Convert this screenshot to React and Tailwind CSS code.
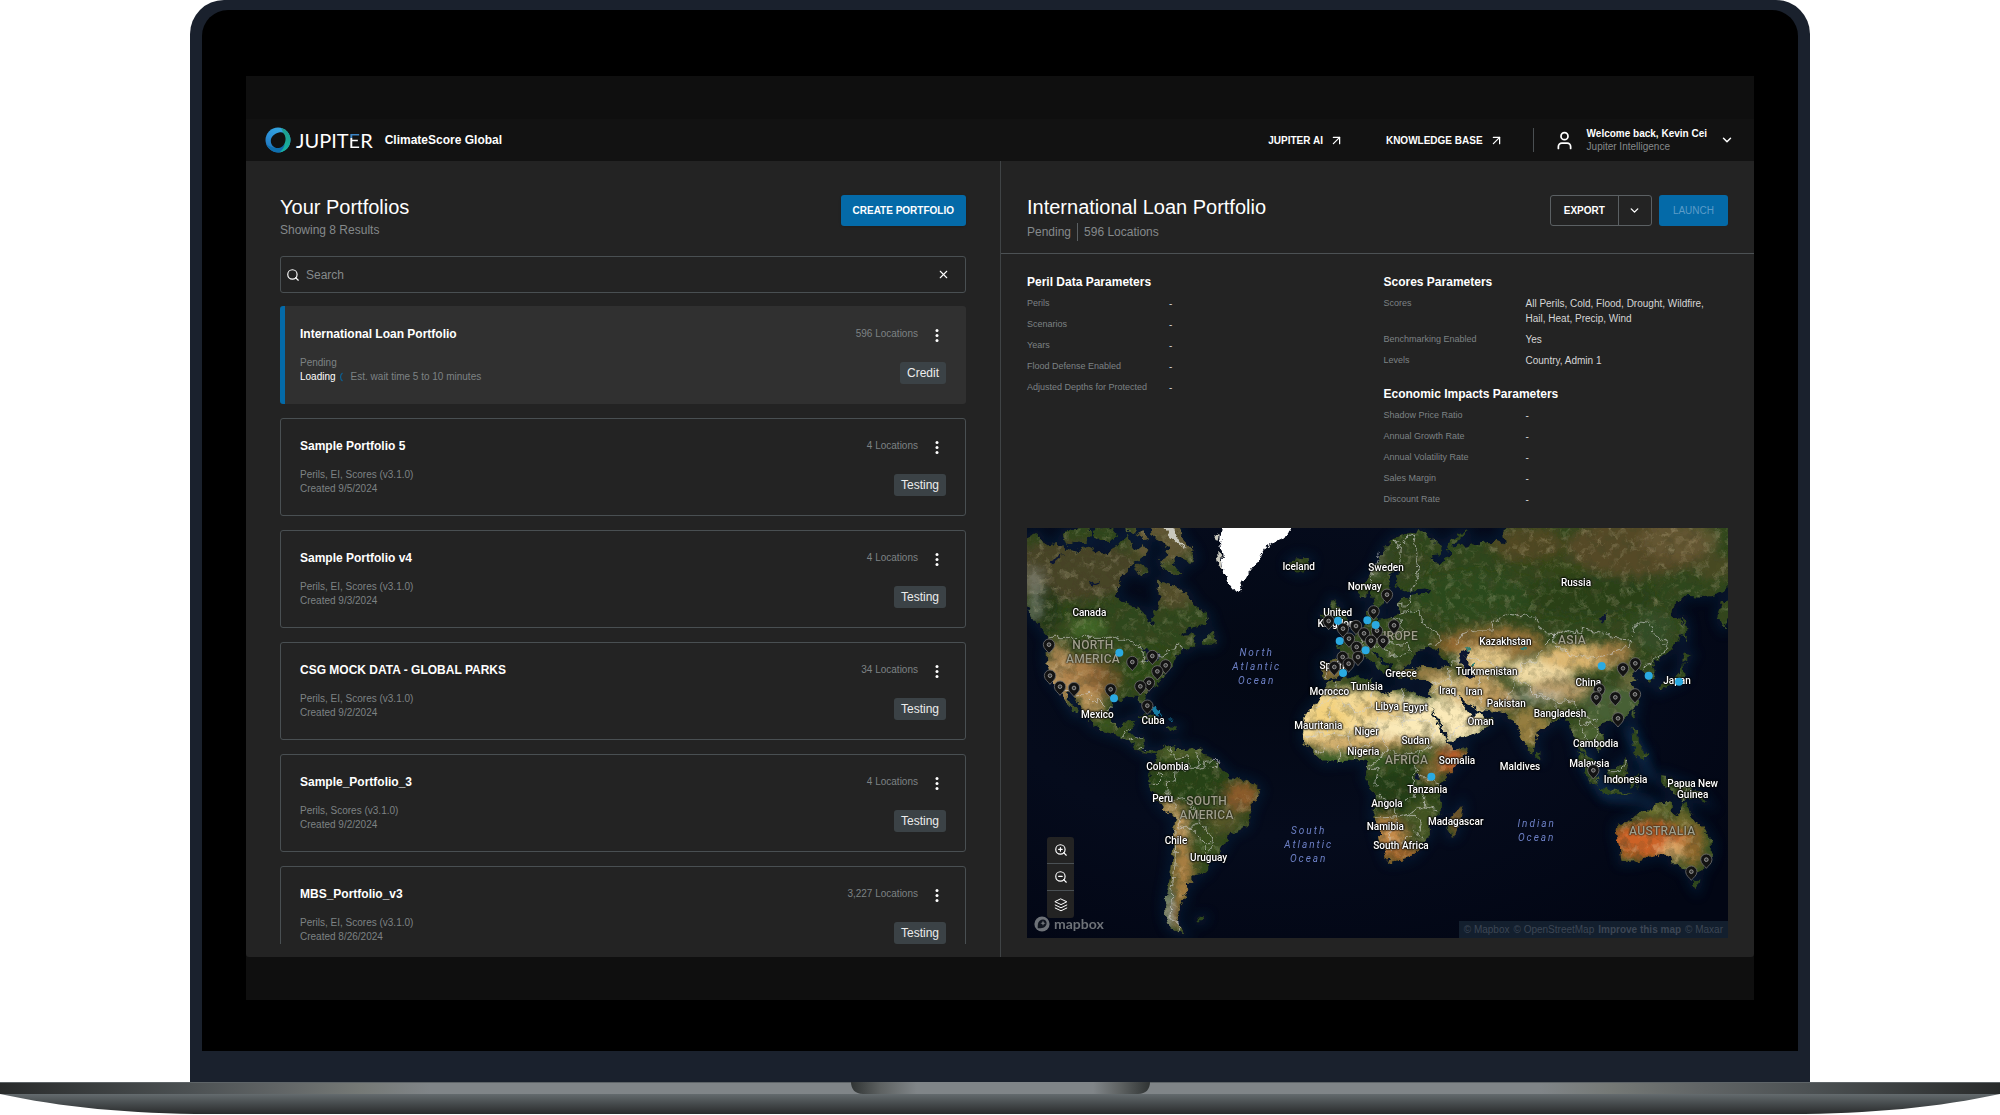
import React, { useState } from 'react';
import { ArrowUpRight, ChevronDown, Search, User, X, ZoomIn, ZoomOut } from 'lucide-react';

const PORTFOLIOS = [
  { name: 'International Loan Portfolio', locations: '596', pending: true, tag: 'Credit' },
  { name: 'Sample Portfolio 5', locations: '4', runs: 'Perils, EI, Scores (v3.1.0)', created: '9/5/2024', tag: 'Testing' },
  { name: 'Sample Portfolio v4', locations: '4', runs: 'Perils, EI, Scores (v3.1.0)', created: '9/3/2024', tag: 'Testing' },
  { name: 'CSG MOCK DATA - GLOBAL PARKS', locations: '34', runs: 'Perils, EI, Scores (v3.1.0)', created: '9/2/2024', tag: 'Testing' },
  { name: 'Sample_Portfolio_3', locations: '4', runs: 'Perils, Scores (v3.1.0)', created: '9/2/2024', tag: 'Testing' },
  { name: 'MBS_Portfolio_v3', locations: '3,227', runs: 'Perils, EI, Scores (v3.1.0)', created: '8/26/2024', tag: 'Testing' },
];

const PERIL_PARAMS = [
  ['Perils', '-'],
  ['Scenarios', '-'],
  ['Years', '-'],
  ['Flood Defense Enabled', '-'],
  ['Adjusted Depths for Protected', '-'],
];

const SCORE_PARAMS = [
  ['Scores', 'All Perils, Cold, Flood, Drought, Wildfire, Hail, Heat, Precip, Wind'],
  ['Benchmarking Enabled', 'Yes'],
  ['Levels', 'Country, Admin 1'],
];

const ECONOMIC_PARAMS = [
  ['Shadow Price Ratio', '-'],
  ['Annual Growth Rate', '-'],
  ['Annual Volatility Rate', '-'],
  ['Sales Margin', '-'],
  ['Discount Rate', '-'],
];

// map units, shared by the terrain, the labels and the markers
const MAP = { x: 21, y: 24, w: 2103, h: 1230 };

const COUNTRIES = [
  ['Canada', 208, 277], ['Mexico', 232, 583], ['Cuba', 399, 599], ['Colombia', 443, 739],
  ['Peru', 428, 834], ['Chile', 468, 961], ['Uruguay', 566, 1012], ['Iceland', 836, 139],
  ['Sweden', 1098, 140], ['Norway', 1034, 199], ['Spain', 936, 434], ['Greece', 1143, 459],
  ['Morocco', 928, 514], ['Tunisia', 1040, 499], ['Libya', 1101, 558], ['Egypt', 1186, 561],
  ['Mauritania', 895, 616], ['Niger', 1040, 633], ['Nigeria', 1030, 692], ['Sudan', 1187, 660],
  ['Somalia', 1311, 719], ['Tanzania', 1222, 806], ['Angola', 1101, 849], ['Namibia', 1096, 917],
  ['Madagascar', 1307, 904], ['South Africa', 1143, 974], ['Iraq', 1283, 510], ['Iran', 1362, 512],
  ['Oman', 1382, 603], ['Kazakhstan', 1456, 364], ['Turkmenistan', 1400, 454], ['Pakistan', 1459, 549],
  ['Russia', 1668, 187], ['China', 1705, 487], ['Bangladesh', 1620, 580], ['Cambodia', 1727, 670],
  ['Malaysia', 1708, 729], ['Indonesia', 1817, 777], ['Maldives', 1500, 738], ['Japan', 1971, 479],
  ['United\nKingdom', 953, 293], ['Papua New\nGuinea', 2018, 808],
];

const CONTINENTS = [
  ['NORTH\nAMERICA', 219, 395], ['SOUTH\nAMERICA', 560, 865], ['EUROPE', 1124, 348],
  ['AFRICA', 1160, 720], ['ASIA', 1656, 360], ['AUSTRALIA', 1927, 933],
];

const OCEANS = [
  ['North\nAtlantic\nOcean', 710, 440], ['South\nAtlantic\nOcean', 866, 976], ['Indian\nOcean', 1550, 933],
];

const PINS = [
  [87, 375], [90, 468], [120, 501], [162, 505], [272, 509], [337, 427], [397, 409], [437, 437], [412, 455],
  [387, 489], [361, 500], [382, 558], [1101, 225], [1061, 275], [926, 304], [1008, 319], [969, 327],
  [1122, 317], [1071, 333], [1032, 341], [987, 357], [1053, 363], [1089, 363], [1010, 382], [968, 412],
  [1014, 412], [986, 432], [943, 442], [1846, 431], [1809, 446], [1738, 509], [1729, 533], [1786, 533],
  [1845, 524], [1794, 596], [1720, 752], [2059, 1020], [2014, 1056],
];

const DOTS = [
  [298, 398], [282, 535], [954, 302], [1042, 301], [1067, 315], [959, 363], [1037, 391], [969, 459],
  [1745, 438], [1886, 467], [1977, 485], [1234, 770],
];

const LAND = [
  // North and Central America
  'M0 62L50 38 75 75 110 70 130 85 170 95 200 80 235 95 262 100 285 85 300 65 320 45 330 60 345 95 372 75 385 90 372 110 350 125 325 150 305 175 290 205 287 225 300 242 330 255 360 265 378 283 383 310 398 318 403 295 398 270 415 258 420 230 410 205 415 182 440 185 470 200 485 222 500 215 512 235 530 262 560 280 570 300 555 318 520 325 500 330 478 345 510 340 525 350 515 365 530 372 500 395 485 390 470 405 462 420 455 440 440 455 430 470 415 490 390 510 375 520 378 540 387 560 385 575 372 560 362 540 350 530 330 530 310 535 290 540 275 545 272 565 268 590 280 612 300 625 315 605 345 602 340 620 330 635 345 650 372 655 370 675 365 690 380 697 405 692 412 700 400 705 375 700 350 688 330 665 300 650 275 642 240 632 215 615 205 600 190 570 165 540 150 515 140 520 155 550 175 580 165 585 145 555 130 530 122 510 100 490 88 460 82 430 80 400 88 370 80 345 60 320 40 290 0 225Z',
  'M125 40L165 24 205 20 215 45 200 68 165 62 140 78Z',
  'M218 30L270 20 292 48 270 70 240 55 222 60Z',
  'M318 10L350 10 345 36 325 40Z',
  'M352 40L372 34 380 56 362 62Z',
  'M388 10L470 10 490 60 520 95 524 120 505 132 480 108 460 112 462 132 482 160 468 168 440 150 414 122 440 110 445 85 420 60 395 45Z',
  'M345 150L352 130 372 140 386 156 368 166Z',
  'M560 350L580 335 590 365 570 378 545 370Z',
  'M350 590L375 583 400 590 432 605 400 607 372 597Z',
  'M440 615L475 620 465 630 440 625Z',
  // South America
  'M412 700L425 685 450 675 470 672 460 690 485 690 515 685 540 690 545 705 575 715 598 735 615 755 625 770 660 778 700 790 718 805 716 825 700 850 690 880 683 915 660 930 630 940 615 970 600 1000 580 1020 560 1025 562 1045 545 1062 520 1065 520 1085 502 1090 505 1105 490 1120 495 1140 480 1160 478 1180 470 1195 475 1210 480 1225 495 1240 470 1235 450 1222 440 1200 435 1160 440 1120 450 1070 458 1010 462 950 465 900 450 880 425 860 405 830 388 795 395 785 388 765 392 745 405 720Z',
  'M532 1196L552 1194 546 1204 534 1204Z',
  // Iceland, British Isles
  'M806 128L830 112 870 118 868 146 838 158 812 148Z',
  'M935 240L960 255 965 280 985 300 980 318 945 322 950 300 940 280 930 260Z',
  'M905 285L930 280 928 310 905 312Z',
  // Africa and Madagascar
  'M925 480L950 480 985 472 1030 472 1060 475 1058 500 1080 512 1110 525 1120 510 1150 508 1180 520 1215 525 1228 540 1235 570 1250 605 1265 640 1285 670 1300 690 1338 682 1335 700 1310 735 1280 770 1262 790 1255 820 1263 850 1262 880 1235 905 1228 925 1230 945 1210 965 1200 985 1175 1010 1140 1020 1110 1025 1100 1015 1095 990 1080 960 1075 925 1060 895 1062 860 1065 830 1055 800 1040 780 1038 755 1045 740 1035 725 1010 715 985 722 950 722 915 728 890 705 870 685 852 665 850 650 855 620 850 600 865 575 885 555 900 530 920 510Z',
  'M1325 855L1328 870 1318 910 1305 945 1290 950 1282 925 1290 900 1310 880Z',
  // Eurasia
  'M905 470L908 440 905 425 940 420 965 425 962 395 945 380 970 370 990 355 1010 340 1030 325 1045 310 1040 285 1045 270 1060 262 1062 290 1075 300 1110 295 1130 285 1140 270 1130 255 1150 235 1185 225 1215 218 1235 213 1215 205 1185 208 1140 212 1128 190 1130 165 1150 140 1135 135 1115 160 1105 185 1110 215 1100 235 1085 260 1075 272 1060 245 1052 215 1045 220 1020 235 1008 215 1015 195 1045 175 1070 135 1090 90 1120 55 1160 40 1200 30 1230 50 1265 80 1262 105 1230 110 1240 125 1255 130 1290 110 1290 80 1310 75 1335 80 1370 70 1430 65 1455 74 1450 35 1455 0 2150 0 2150 205 2124 205 2090 220 2060 228 2000 225 1960 260 1955 290 1985 300 1990 330 1975 365 1950 390 1930 410 1905 425 1895 445 1905 480 1885 490 1880 465 1865 450 1840 455 1830 465 1850 475 1830 490 1850 515 1855 545 1840 570 1815 590 1790 605 1770 605 1750 615 1735 625 1750 650 1755 670 1735 690 1720 680 1705 665 1690 670 1690 690 1715 720 1725 745 1705 735 1685 700 1675 660 1655 640 1650 610 1635 595 1605 600 1590 615 1555 640 1548 670 1535 698 1520 680 1500 640 1490 610 1470 600 1455 580 1430 575 1375 570 1355 555 1335 545 1322 530 1330 555 1345 575 1362 592 1380 575 1395 590 1420 603 1390 630 1350 645 1300 663 1285 665 1275 640 1255 600 1235 565 1228 545 1230 520 1232 490 1225 480 1200 480 1165 478 1150 460 1165 445 1215 440 1260 445 1290 435 1270 415 1255 400 1270 385 1240 395 1225 385 1200 385 1180 405 1172 430 1150 440 1155 460 1140 475 1125 460 1115 445 1100 425 1075 410 1070 395 1058 390 1060 400 1085 425 1105 440 1090 460 1075 445 1050 420 1030 405 1010 410 985 425 975 450 955 472 925 475Z',
  'M1282 95L1290 60 1320 38 1350 34 1320 54 1300 80Z',
  // Japan, Sakhalin, Kamchatka
  'M1988 400L2014 406 2000 425 1984 420Z',
  'M1990 428L1994 470 1975 487 1940 497 1918 512 1910 502 1935 486 1965 475 1980 455Z',
  'M1990 285L2002 330 1998 368 1988 350Z',
  'M2150 230L2105 250 2095 290 2110 322 2124 300Z',
  // South-east Asia
  'M1836 578L1846 576 1842 598 1834 592Z',
  'M1835 625L1850 630 1850 660 1865 690 1882 700 1872 722 1850 710 1842 680Z',
  'M1545 692L1558 700 1558 716 1546 712Z',
  'M1675 695L1700 720 1730 760 1738 797 1720 795 1700 765 1680 725Z',
  'M1735 803L1790 810 1832 824 1790 826 1740 817Z',
  'M1765 750L1800 738 1815 716 1826 740 1815 780 1790 792 1765 775Z',
  'M1832 770L1862 762 1850 780 1857 812 1845 790 1838 808Z',
  'M1920 768L1945 772 1975 785 2010 795 2040 820 2062 848 2030 835 1990 840 1970 825 1945 805 1920 790Z',
  // Australia
  'M1788 940L1792 915 1830 900 1855 880 1885 875 1905 855 1930 845 1955 848 1955 875 1980 885 1990 850 2000 845 2010 880 2030 905 2055 930 2075 965 2075 1000 2060 1035 2040 1055 2015 1060 1990 1045 1975 1030 1955 1030 1950 1010 1930 1005 1895 1010 1860 1020 1830 1025 1805 1025 1800 990Z',
  'M2015 1085L2038 1085 2030 1108Z',
].join('');

const ICE = 'M607 0L825 0 808 42 770 60 735 85 715 120 690 150 668 190 655 217 640 205 622 180 612 150 608 110 600 70Z';

const INLAND_WATER =
  'M1318 400L1335 392 1345 400 1338 415 1355 440 1362 470 1352 482 1336 474 1332 446 1318 420ZM365 385L388 392 398 402 385 405ZM384 404L392 408 382 428 374 426ZM402 400L425 408 410 418ZM1186 764L1200 762 1198 780 1188 778ZM210 190L240 180 236 190 214 198ZM95 118L130 104 100 130ZM1735 305L1762 276 1754 300 1742 312Z';

const BORDERS = [
  'M88 352L285 352 315 362 340 365 365 385 375 405 370 430 400 415 425 408 445 395 462 392 470 372 480 375 485 395',
  'M122 510L150 512 170 525 205 520 225 540 240 545 255 562 272 568',
  'M308 650L320 628 335 626M330 662L345 650 368 655M352 688L370 680M372 700L380 690',
  'M450 676L445 700 470 715 505 710 508 745 468 752 466 782 440 792 438 815 462 840 470 872M505 745L540 745 530 700M545 748L560 720 598 722 590 745 560 745M392 790L410 790 435 765 405 760M470 838L500 832 505 860 535 875 538 905 520 925 485 925 470 895M540 905L550 925 575 940 580 965 550 965 522 935M550 965L560 985 555 1020M580 965L570 1000M468 930L465 1030 455 1120 450 1200 475 1205 475 1235',
  'M1078 100L1060 150 1055 210M1122 60L1140 90 1140 130M1122 60L1150 72 1165 45 1190 42 1182 80 1198 170 1175 208M1172 222L1168 250 1130 260M1130 280L1165 275 1200 270 1205 310 1250 335 1260 350 1250 372 1225 378M1060 300L1068 330 1095 340 1125 350 1145 335 1140 300 1120 290M1030 335L1020 365 1035 385 1060 380 1090 375 1100 400 1130 405 1165 400M1095 345L1120 375 1160 370 1175 395M950 425L985 428M920 430L922 470',
  'M1288 440L1310 420 1330 440M1232 490L1290 478 1285 445M1290 478L1300 510 1322 530M1232 520L1260 500 1290 520 1320 535M1300 630L1340 610 1372 580M1300 630L1290 660',
  'M1310 375L1325 345 1360 330 1420 330 1412 310 1470 280 1490 285 1510 280 1530 295 1545 292 1580 340 1605 345 1575 375 1560 390 1550 420 1500 435 1495 460 1450 445 1400 425 1360 420 1345 410M1605 345L1640 330 1680 340 1690 325 1730 335 1780 355 1835 360 1830 382 1800 385 1770 405 1700 415 1640 400 1605 370 1600 345M1835 345L1850 305 1885 310 1900 340 1940 365 1930 400 1905 420 1870 445',
  'M1495 460L1480 490 1470 520 1450 550 1400 560M1495 470L1520 500 1550 530 1610 545 1660 540 1670 570 1690 590 1735 600M1555 520L1600 540M1610 550L1615 590 1635 595M1670 575L1680 620 1710 605 1735 640 1725 665M1685 625L1700 660M1380 470L1375 520 1390 560M1400 470L1440 460',
  'M950 482L945 530 890 560M945 530L1010 580 1055 560 1060 500M1150 508L1150 600 1225 600M1150 600L1100 580 1055 560M1150 620L1150 600M930 560L925 640 860 650M925 640L985 650 1010 610M985 650L990 690 1045 680 1070 650 1070 590M1010 720L1005 690M960 722L955 670M880 690L910 700 915 680M1045 740L1075 720 1100 690 1090 650M1100 690L1140 700 1200 695 1235 680 1240 640 1225 600M1200 695L1185 740 1200 770 1260 790M1045 745L1075 745 1065 800M1065 830L1090 830 1100 850 1130 850 1130 890 1065 895M1130 850L1180 830 1180 770 1185 740M1130 890L1165 880 1210 860 1255 870M1130 890L1110 950 1110 985 1140 970 1180 935 1210 950M1165 880L1205 900 1200 935M1210 860L1212 820 1180 800',
  'M1768 755L1800 755 1818 725M1992 785L1992 838',
];

// soft patches of ground colour: [cx, cy, rx, ry, fill, opacity]
const GROUND = [
  [150, 150, 220, 90, '#4b4227', 0.9], [70, 270, 50, 80, '#23361a', 0.9], [40, 190, 30, 50, '#8d9186', 0.6],
  [430, 60, 100, 70, '#665a38', 0.9], [465, 215, 70, 50, '#57502f', 0.9], [200, 320, 60, 28, '#47702a', 0.8],
  [45, 265, 22, 30, '#b9bcb5', 0.4], [120, 470, 50, 90, '#b08b56', 1], [190, 470, 60, 60, '#b4824a', 0.9],
  [110, 400, 22, 40, '#a27f4d', 0.8], [215, 540, 40, 50, '#c49a5e', 0.9], [250, 480, 50, 50, '#8a5d30', 0.7],
  [385, 445, 80, 60, '#2c4818', 0.9], [270, 610, 50, 25, '#3c5520', 0.9], [250, 400, 50, 30, '#51602c', 0.6],
  [500, 780, 120, 80, '#274219', 1], [480, 695, 70, 16, '#6c7a35', 0.6], [665, 830, 50, 45, '#8f5c2b', 0.95],
  [610, 900, 50, 40, '#5e5a2a', 0.8], [440, 870, 40, 22, '#c79f63', 0.9], [483, 940, 22, 70, '#d2a263', 1],
  [490, 1060, 30, 90, '#b08243', 0.95], [470, 1180, 20, 50, '#8a6a3a', 0.9], [440, 1170, 9, 70, '#dfe3e4', 0.7],
  [560, 980, 35, 60, '#37511f', 0.9],
  [1000, 600, 230, 95, '#f6dc98', 1], [1160, 600, 120, 70, '#fbeab8', 1], [930, 590, 60, 50, '#f3d07c', 0.9],
  [1080, 570, 70, 30, '#e6c377', 0.8], [1050, 668, 230, 14, '#b88a46', 0.8], [1120, 790, 90, 85, '#203c18', 1],
  [960, 715, 110, 26, '#3d5f25', 1], [1060, 722, 100, 30, '#3b5a24', 0.9], [1290, 720, 45, 40, '#bd5f2c', 1],
  [1235, 740, 30, 60, '#8a6a32', 0.8], [1220, 700, 36, 28, '#44602a', 0.8], [1100, 950, 60, 60, '#c48a48', 1],
  [1140, 1000, 60, 30, '#a8672f', 0.9], [1205, 900, 50, 55, '#4a5a26', 0.8], [1310, 900, 16, 60, '#a2623a', 0.8],
  [1290, 600, 110, 70, '#fbeab8', 1], [1370, 510, 80, 55, '#c7a566', 1], [1220, 460, 80, 22, '#a8864c', 0.9],
  [1280, 500, 60, 30, '#e6c98a', 0.9], [1440, 540, 50, 40, '#c9a060', 0.9], [1420, 370, 150, 50, '#9a7438', 0.95],
  [1390, 420, 80, 38, '#e6c989', 1], [1290, 370, 50, 26, '#97672f', 0.7], [1560, 455, 100, 42, '#f2dca4', 1],
  [1620, 510, 100, 34, '#b59a66', 1], [1690, 410, 130, 40, '#dcb66f', 1], [1780, 400, 60, 34, '#a58045', 0.9],
  [1540, 530, 90, 12, '#e4e2dc', 0.55], [1530, 620, 60, 60, '#9b8140', 0.95], [1600, 580, 50, 22, '#5f6a30', 0.8],
  [1770, 550, 90, 55, '#466036', 1], [1840, 480, 40, 26, '#8b8350', 0.7], [1710, 640, 50, 60, '#4a5f30', 0.9],
  [1600, 110, 160, 70, '#33441c', 0.8], [1520, 70, 110, 50, '#5a4a26', 0.8], [1850, 80, 210, 90, '#594a2a', 0.9],
  [1980, 60, 120, 60, '#6b5b38', 0.7], [1700, 230, 200, 60, '#2a4118', 0.9], [1350, 230, 180, 70, '#2d4b1c', 0.9],
  [1150, 130, 60, 60, '#34431f', 0.8], [1060, 110, 22, 60, '#a9ada3', 0.4], [940, 450, 40, 28, '#a37c42', 0.9],
  [1100, 370, 60, 40, '#46602a', 0.7], [1900, 330, 60, 60, '#34502a', 0.9], [2080, 140, 60, 40, '#4f4c26', 0.8],
  [1890, 960, 120, 55, '#cc6227', 1], [1960, 990, 40, 30, '#e2b070', 0.9], [2020, 970, 40, 60, '#a8702f', 0.8],
  [2060, 960, 18, 90, '#3f5524', 0.8], [1990, 905, 40, 30, '#7d7231', 0.8], [1900, 870, 60, 18, '#7c7a34', 0.9],
  [2010, 1045, 40, 16, '#4b5f2a', 0.9], [1810, 1020, 20, 14, '#6a6a30', 0.8],
];

const place = (x, y) => ({
  left: `${((x - MAP.x) / MAP.w) * 100}%`,
  top: `${((y - MAP.y) / MAP.h) * 100}%`,
});

const MapTerrain = () => (
  <svg viewBox="21 24 2103 1230" className="absolute inset-0 size-full" aria-hidden="true">
    <defs>
      <clipPath id="land"><path d={LAND} /></clipPath>
      <radialGradient id="sea" cx="0.35" cy="0.35" r="0.8">
        <stop offset="0" stopColor="#030814" />
        <stop offset="0.5" stopColor="#050b1c" />
        <stop offset="1" stopColor="#020614" />
      </radialGradient>
      <filter id="soft" x="-20%" y="-20%" width="140%" height="140%"><feGaussianBlur stdDeviation="12" /></filter>
      <filter id="shelf"><feGaussianBlur stdDeviation="16" /></filter>
      <filter id="coast" x="0" y="0" width="100%" height="100%">
        <feTurbulence type="fractalNoise" baseFrequency="0.045" numOctaves="4" seed="7" result="n" />
        <feDisplacementMap in="SourceGraphic" in2="n" scale="26" xChannelSelector="R" yChannelSelector="G" />
      </filter>
      <filter id="relief" x="0" y="0" width="100%" height="100%">
        <feTurbulence type="fractalNoise" baseFrequency="0.03" numOctaves="5" seed="3" />
        <feColorMatrix values="0 0 0 0 0.06  0 0 0 0 0.06  0 0 0 0 0.02  2.4 0 0 0 -1.1" />
      </filter>
      <filter id="glints" x="0" y="0" width="100%" height="100%">
        <feTurbulence type="fractalNoise" baseFrequency="0.04" numOctaves="5" seed="12" />
        <feColorMatrix values="0 0 0 0 0.85  0 0 0 0 0.75  0 0 0 0 0.5  0 2.4 0 0 -1.25" />
      </filter>
    </defs>
    <rect x="21" y="24" width="2103" height="1230" fill="url(#sea)" />
    <path d={LAND} fill="none" stroke="#10305a" strokeWidth="22" opacity="0.4" filter="url(#shelf)" />
    <path d="M1690 700L1760 830 1880 840 1900 860M1820 620L1870 720 1900 780" fill="none" stroke="#174a78" strokeWidth="22" opacity="0.5" filter="url(#shelf)" />
    <g filter="url(#coast)">
      <rect x="0" y="0" width="2150" height="1280" fill="none" />
      <g clipPath="url(#land)">
        <rect x="0" y="0" width="2150" height="1280" fill="#2f461c" />
        <g filter="url(#soft)">
          {GROUND.map(([cx, cy, rx, ry, fill, opacity], i) => (
            <ellipse key={i} cx={cx} cy={cy} rx={rx} ry={ry} fill={fill} opacity={opacity} />
          ))}
        </g>
        <rect x="0" y="0" width="2150" height="1280" filter="url(#relief)" opacity="0.45" />
        <rect x="0" y="0" width="2150" height="1280" filter="url(#glints)" opacity="0.3" />
      </g>
      <path d={ICE} fill="#fff" />
      <path d="M430 20L462 24 480 62 500 90 470 70 448 48ZM588 95L604 110 612 150 596 140ZM585 40L600 44 596 62 583 58Z" fill="#c9c8bd" />
      <path d={INLAND_WATER} fill="#0b1733" />
      <path d="M1333 384L1352 380 1350 394 1332 396ZM1356 430L1363 432 1360 444 1354 440ZM1502 386L1522 380 1520 388 1504 392Z" fill="#2f7f74" />
      <path d="M400 562L418 572 412 590 402 584ZM418 578L430 586 424 590ZM448 598L456 600 452 604Z" fill="#167ba3" />
    </g>
    <g filter="url(#coast)">
      <rect x="0" y="0" width="2150" height="1280" fill="none" />
      {BORDERS.map((d) => (
        <path key={d} d={d} fill="none" stroke="#cfcfcf" strokeWidth="3" strokeLinejoin="round" opacity="0.65" />
      ))}
    </g>
  </svg>
);

const MapMarkers = () => (
  <svg viewBox="21 24 2103 1230" className="absolute inset-0 size-full" aria-hidden="true">
    {PINS.map(([x, y]) => (
      <g key={`${x}-${y}`} transform={`translate(${x} ${y})`}>
        <path d="M0 25C-5 17 -17 11 -17 -1A17 17 0 0 1 17 -1C17 11 5 17 0 25Z" fill="#131313" stroke="#6e6e6e" strokeWidth="2.5" />
        <circle r="5.5" cy="-1" fill="#3a3a3a" stroke="#a3a3a3" strokeWidth="2.5" />
      </g>
    ))}
    {DOTS.map(([x, y]) => (
      <circle key={`${x}-${y}`} cx={x} cy={y} r="12" fill="#2aaae2" />
    ))}
  </svg>
);

const WorldMap = () => (
  <div className="relative mt-[21px] aspect-[701/410] w-full overflow-hidden bg-[#040a18] font-[Roboto,sans-serif]">
    <MapTerrain />
    {CONTINENTS.map(([name, x, y]) => (
      <span
        key={name}
        style={place(x, y)}
        className="absolute -translate-x-1/2 -translate-y-1/2 whitespace-pre text-center text-[12px] font-medium leading-[14px] tracking-wide text-[#a09f8c] [text-shadow:0_0_2px_#1b1b12,0_0_2px_#1b1b12]"
      >
        {name}
      </span>
    ))}
    {OCEANS.map(([name, x, y]) => (
      <span
        key={name}
        style={place(x, y)}
        className="absolute -translate-x-1/2 -translate-y-1/2 whitespace-pre text-center text-[10px] italic leading-[14px] tracking-[2px] text-[#6d80c6]"
      >
        {name}
      </span>
    ))}
    {COUNTRIES.map(([name, x, y]) => (
      <span
        key={name}
        style={place(x, y)}
        className="absolute -translate-x-1/2 -translate-y-1/2 whitespace-pre text-center text-[10px] font-medium leading-[11px] text-white [text-shadow:0_0_1px_#000,0_0_2px_#000,0_0_2px_#000,0_0_2px_#000,0_0_3px_#000]"
      >
        {name}
      </span>
    ))}
    <MapMarkers />

    <div className="absolute bottom-5 left-5 flex flex-col divide-y divide-[#4a5054] overflow-hidden rounded-[3px] bg-[#232323] text-white">
      <button type="button" aria-label="Zoom in" className="flex h-[27px] w-[27px] items-center justify-center">
        <ZoomIn size={14} />
      </button>
      <button type="button" aria-label="Zoom out" className="flex h-[27px] w-[27px] items-center justify-center">
        <ZoomOut size={14} />
      </button>
      <button type="button" aria-label="Layers" className="flex h-[27px] w-[27px] items-center justify-center">
        <StackIcon />
      </button>
    </div>

    <a href="#mapbox" className="absolute bottom-[6px] left-[7px] flex items-center gap-1 font-[Lato,sans-serif] text-[14px] font-bold leading-4 text-[#6e7278]">
      <svg viewBox="0 0 16 16" className="size-4" aria-hidden="true">
        <circle cx="8" cy="8" r="7.6" fill="#6e7278" />
        <path d="M3.8 12.2C3.4 8.6 4 3.6 9 3.4C11 3.4 12.6 5 12.6 7C12.4 11.8 7.6 12.6 3.8 12.2Z" fill="#10151f" />
        <path d="M9 4.6L9.8 6.4 11.6 7.2 9.8 8 9 9.8 8.2 8 6.4 7.2 8.2 6.4Z" fill="#6e7278" />
      </svg>
      mapbox
    </a>

    <div className="absolute bottom-0 right-0 flex gap-1 bg-[#131f2e] px-[5px] font-['Liberation_Sans',Arial,sans-serif] text-[10px] leading-[17px] text-[#3d4654]">
      <a href="#mapbox">© Mapbox</a>
      <a href="#osm">© OpenStreetMap</a>
      <a href="#improve" className="font-bold">Improve this map</a>
      <a href="#maxar">© Maxar</a>
    </div>
  </div>
);

const StackIcon = () => (
  <svg viewBox="0 0 14 14" className="size-[14px]" fill="none" stroke="currentColor" strokeWidth="1" strokeLinejoin="round" strokeLinecap="round" aria-hidden="true">
    <path d="M7 1L12.8 3.8 7 6.6 1.2 3.8Z" />
    <path d="M1.2 7L7 9.8 12.8 7" />
    <path d="M1.2 10L7 12.8 12.8 10" />
  </svg>
);

const Logo = () => (
  <div className="flex items-center gap-[5px]">
    <svg viewBox="0 0 26 26" className="size-[26px]" aria-hidden="true">
      <defs>
        <linearGradient id="ringBlue" x1="0.7" y1="0" x2="0.2" y2="1">
          <stop offset="0" stopColor="#35a8e0" />
          <stop offset="0.5" stopColor="#2b8fd6" />
          <stop offset="1" stopColor="#1d6fb5" />
        </linearGradient>
        <linearGradient id="ringTeal" x1="0.6" y1="0" x2="0.4" y2="1">
          <stop offset="0" stopColor="#1f9a8c" />
          <stop offset="1" stopColor="#17b3a0" />
        </linearGradient>
      </defs>
      <circle cx="13" cy="13" r="12.5" fill="url(#ringBlue)" />
      <path d="M16 0.900C22 2.500 25.500 7.500 25.500 13C25.500 19.500 20.500 24.800 14.500 25.400C19 21.500 21.500 10 16 0.900Z" fill="url(#ringTeal)" />
      <path d="M1.500 17.500C4 22.500 8.500 25.800 14.500 25.400C17.500 23 19.500 20 19.800 17C15 21.500 8 22 1.500 17.500Z" fill="#0e6fae" />
      <path d="M14 5.500C17.500 4.500 20 6.500 20.500 11C21 16 18 20.500 13.500 21C9 21.400 6 18 5.800 14C5.700 10.500 9 6.500 14 5.500Z" fill="#111" />
    </svg>
    <span className="font-[Lato,sans-serif] text-[20px] leading-6 text-white">
      JUPIT
      <span className="bg-gradient-to-b from-[#3d86c6] from-40% to-white to-40% bg-clip-text text-transparent">E</span>
      R
    </span>
  </div>
);

const Header = () => (
  <header className="flex h-[42px] items-center justify-between bg-[#121212] pl-[19px] pr-5 text-white">
    <div className="flex items-center gap-3">
      <Logo />
      <span className="text-[12px] font-bold">ClimateScore Global</span>
    </div>
    <nav className="flex items-center text-[10px]">
      <a href="#ai" className="flex items-center gap-[6px] font-bold">
        JUPITER AI <ArrowUpRight size={15} strokeWidth={2} />
      </a>
      <a href="#kb" className="ml-[42px] flex items-center gap-[6px] font-bold">
        KNOWLEDGE BASE <ArrowUpRight size={15} strokeWidth={2} />
      </a>
      <span className="ml-[29px] h-6 w-px bg-[#4a4f52]" />
      <button type="button" className="ml-5 flex items-center text-left">
        <User size={21} strokeWidth={2} />
        <span className="ml-3 leading-[13px]">
          <span className="block font-bold">Welcome back, Kevin Cei</span>
          <span className="block text-[#85898b]">Jupiter Intelligence</span>
        </span>
        <ChevronDown size={14} strokeWidth={2.5} className="ml-[13px]" />
      </button>
    </nav>
  </header>
);

const PortfolioCard = ({ portfolio, selected, onSelect }) => (
  <li
    onClick={onSelect}
    className={
      selected
        ? 'flex h-[98px] shrink-0 flex-col rounded-[3px] border-l-[5px] border-[#046aa8] bg-[#303030] pb-5 pl-[15px] pr-5 pt-5'
        : 'flex h-[98px] shrink-0 flex-col rounded-[3px] border border-[#494f52] pb-[19px] pl-[19px] pr-[19px] pt-[19px]'
    }
  >
    <div className="flex h-5 items-start">
      <h3 className="grow text-[12px] font-bold leading-4 text-white">{portfolio.name}</h3>
      <span className="text-[10px] leading-4 text-[#7d8284]">{portfolio.locations} Locations</span>
      <button type="button" aria-label={`Options for ${portfolio.name}`} className="ml-[9px] flex h-[18px] w-[19px] items-center justify-center text-white">
        <svg viewBox="0 0 4 14" className="h-[14px] w-1" fill="currentColor" aria-hidden="true">
          <circle cx="2" cy="2.500" r="1.500" />
          <circle cx="2" cy="7.500" r="1.500" />
          <circle cx="2" cy="12.500" r="1.500" />
        </svg>
      </button>
    </div>
    <div className="flex grow items-end justify-between">
      <div className="text-[10px] leading-[14px] text-[#7d8284]">
        {portfolio.pending ? (
          <>
            <p>Pending</p>
            <p className="flex items-center">
              <span className="text-white">Loading</span>
              <svg viewBox="0 0 10 10" className="ml-[3px] size-[10px]" fill="none" stroke="#0b5f92" strokeWidth="1.200" aria-hidden="true">
                <path d="M3.500 1A5 5 0 0 0 3.500 9" />
              </svg>
              <span className="ml-[2px]">Est. wait time 5 to 10 minutes</span>
            </p>
          </>
        ) : (
          <>
            <p>{portfolio.runs}</p>
            <p>Created {portfolio.created}</p>
          </>
        )}
      </div>
      <span className="rounded-[3px] bg-[#3b4246] px-[7px] text-[12px] leading-[22px] text-[#ececec]">{portfolio.tag}</span>
    </div>
  </li>
);

const PortfolioList = () => {
  const [query, setQuery] = useState('');
  const [selected, setSelected] = useState(PORTFOLIOS[0].name);
  const visible = PORTFOLIOS.filter((p) => p.name.toLowerCase().includes(query.toLowerCase()));

  return (
    <section className="flex flex-col px-[34px] pb-[13px] pt-[34px]">
      <div className="flex items-start justify-between">
        <div>
          <h1 className="text-[20px] leading-6 text-white">Your Portfolios</h1>
          <p className="mt-[2px] text-[12px] leading-[18px] text-[#85898b]">Showing 8 Results</p>
        </div>
        <button type="button" className="h-[31px] rounded-[3px] bg-[#046aa8] px-3 text-[10px] font-bold text-white shadow">
          CREATE PORTFOLIO
        </button>
      </div>

      <div className="mt-[17px] flex h-[37px] items-center rounded-[3px] border border-[#494f52] pl-[5px] pr-[15px] text-white">
        <Search size={14} />
        <input
          type="text"
          aria-label="Search portfolios"
          placeholder="Search"
          value={query}
          onChange={(e) => setQuery(e.target.value)}
          className="ml-[6px] grow bg-transparent text-[12px] outline-none placeholder:text-[#85898b]"
        />
        <button type="button" aria-label="Clear search" onClick={() => setQuery('')}>
          <X size={13} />
        </button>
      </div>

      <ul className="mt-[13px] flex h-0 grow flex-col gap-[14px] overflow-y-auto [scrollbar-width:none]">
        {visible.map((p) => (
          <PortfolioCard key={p.name} portfolio={p} selected={p.name === selected} onSelect={() => setSelected(p.name)} />
        ))}
      </ul>
    </section>
  );
};

const ParamList = ({ title, rows }) => (
  <div>
    <h3 className="text-[12px] font-bold leading-4 text-white">{title}</h3>
    <dl className="mt-[6px] flex flex-col gap-[6px] leading-[15px]">
      {rows.map(([label, value]) => (
        <div key={label} className="flex pr-4">
          <dt className="w-[142px] shrink-0 text-[9px] text-[#7d8284]">{label}</dt>
          <dd className="text-[10px] text-[#d6d6d6]">{value}</dd>
        </div>
      ))}
    </dl>
  </div>
);

const PortfolioDetail = () => (
  <section className="border-l border-[#3f4345]">
    <div className="flex items-start justify-between border-b border-[#4c5154] pb-3 pl-[26px] pr-[26px] pt-[34px]">
      <div>
        <h2 className="text-[20px] leading-6 text-white">International Loan Portfolio</h2>
        <p className="mt-1 flex text-[12px] leading-[18px] text-[#85898b]">
          <span>Pending</span>
          <span className="ml-[6px] border-l border-[#5b6063] pl-[6px]">596 Locations</span>
        </p>
      </div>
      <div className="flex gap-[7px] text-[10px]">
        <div className="flex h-[31px] divide-x divide-[#5b6063] rounded-[3px] border border-[#5b6063] text-white">
          <button type="button" className="px-[13px] font-bold">EXPORT</button>
          <button type="button" aria-label="Export options" className="flex w-8 items-center justify-center">
            <ChevronDown size={13} strokeWidth={2.5} />
          </button>
        </div>
        <button type="button" disabled className="h-[31px] rounded-[3px] bg-[#046aa8] px-[14px] text-[#5b9cc8]">
          LAUNCH
        </button>
      </div>
    </div>

    <div className="px-[26px] pb-[19px] pt-5">
      <div className="grid grid-cols-2 gap-x-3">
        <ParamList title="Peril Data Parameters" rows={PERIL_PARAMS} />
        <div className="flex flex-col gap-[18px]">
          <ParamList title="Scores Parameters" rows={SCORE_PARAMS} />
          <ParamList title="Economic Impacts Parameters" rows={ECONOMIC_PARAMS} />
        </div>
      </div>
      <WorldMap />
    </div>
  </section>
);

const LaptopBase = () => (
  <svg viewBox="0 0 2000 33" preserveAspectRatio="none" className="block h-[33px] w-full" aria-hidden="true">
    <defs>
      <linearGradient id="deck">
        <stop offset="0" stopColor="#292b2b" />
        <stop offset="0.095" stopColor="#4c5153" />
        <stop offset="0.14" stopColor="#616566" />
        <stop offset="0.18" stopColor="#757976" />
        <stop offset="0.215" stopColor="#808588" />
        <stop offset="0.77" stopColor="#808588" />
        <stop offset="0.805" stopColor="#757976" />
        <stop offset="0.85" stopColor="#616566" />
        <stop offset="0.905" stopColor="#4c5153" />
        <stop offset="1" stopColor="#292b2b" />
      </linearGradient>
      <linearGradient id="belly" x1="0" y1="0" x2="0" y2="1">
        <stop offset="0" stopColor="#646b6e" />
        <stop offset="0.5" stopColor="#454a4c" />
        <stop offset="1" stopColor="#2a2b2c" />
      </linearGradient>
      <linearGradient id="notch">
        <stop offset="0" stopColor="#303434" />
        <stop offset="0.1" stopColor="#5e6262" />
        <stop offset="0.22" stopColor="#808588" />
        <stop offset="0.81" stopColor="#808588" />
        <stop offset="0.9" stopColor="#5e6262" />
        <stop offset="1" stopColor="#303434" />
      </linearGradient>
    </defs>
    <path d="M0 12C60 25 130 32 210 32H1790C1870 32 1940 25 2000 12Z" fill="url(#belly)" />
    <rect width="2000" height="12" fill="url(#deck)" />
    <rect width="2000" height="1" fill="#5f6568" />
    <path d="M851 0H1150C1150 7 1146 12 1138 12H863C855 12 851 7 851 0Z" fill="url(#notch)" />
  </svg>
);

const App = () => (
  <div className="bg-white font-['Liberation_Sans',Arial,sans-serif]">
    <div className="mx-[9.5%] rounded-t-[34px] bg-[#1a212d] px-3 pb-[31px] pt-[10px]">
      <div className="rounded-t-[26px] bg-black px-11 pb-[51px] pt-[66px]">
        <div className="bg-[#0f0f0f] py-[43px]">
          <Header />
          <main className="grid grid-cols-2 rounded-b-[3px] bg-[#232323]">
            <PortfolioList />
            <PortfolioDetail />
          </main>
        </div>
      </div>
    </div>
    <LaptopBase />
  </div>
);

export default App;
